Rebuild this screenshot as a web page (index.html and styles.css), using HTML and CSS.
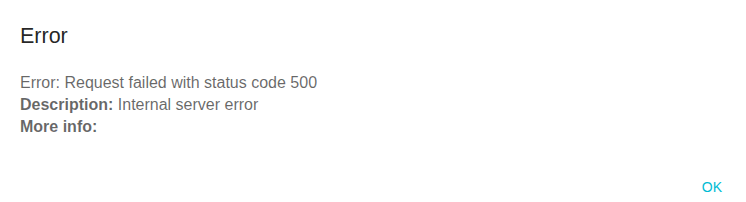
FILE: index.html
```html
<!DOCTYPE html>
<html lang="en">
<head>
    <meta charset="UTF-8">
    <meta name="viewport" content="width=device-width, initial-scale=1.0">
    <title>Error</title>
    <link rel="stylesheet" href="styles.css">
</head>
<body>
    <div class="dialog">
        <h3 class="dialog-title">Error</h3>

        <div class="dialog-body">
            <div>Error: Request failed with status code 500</div>
            <div><b>Description:</b> Internal server error</div>
            <div><b>More info:</b></div>
        </div>

        <div class="dialog-actions">
            <button class="btn-flat">OK</button>
        </div>
    </div>
</body>
</html>
```

FILE: styles.css
```css
body {
    font-family: "Liberation Sans", Arial, sans-serif;
    background: #fff;
    margin: 0;
}

.dialog {
    width: 746px;
    height: 202px;
    box-sizing: border-box;
    display: flex;
    flex-direction: column;
}

.dialog-title {
    margin: 0;
    padding: 22px 20px 0;
    font-size: 21.5px;
    font-weight: normal;
    line-height: 28px;
    color: rgba(0, 0, 0, 0.87);
}

.dialog-body {
    padding: 22px 20px 0;
    font-size: 16px;
    line-height: 22px;
    color: rgba(0, 0, 0, 0.6);
}

.dialog-actions {
    margin-top: auto;
    display: flex;
    justify-content: flex-end;
    padding: 0 16px;
}

.btn-flat {
    background: none;
    border: none;
    font-family: inherit;
    font-size: 14px;
    color: #00bcd4;
    padding: 0 8px;
    height: 30px;
    line-height: 30px;
    cursor: pointer;
}
```
